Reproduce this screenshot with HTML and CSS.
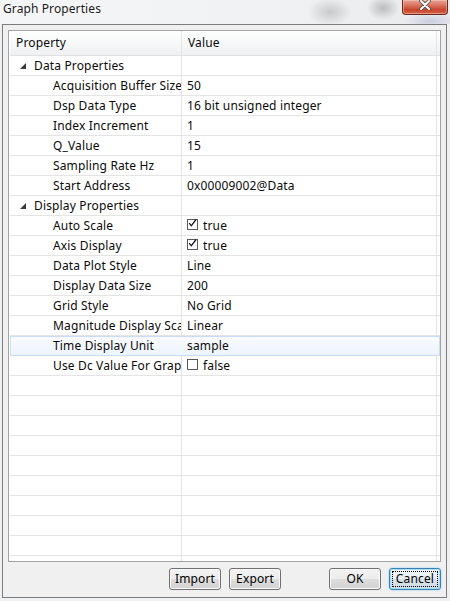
FILE: index.html
```html
<!DOCTYPE html>
<html lang="en">
<head>
<meta charset="utf-8">
<title>Graph Properties</title>
<link rel="stylesheet" href="styles.css">
</head>
<body>
<div class="window">
  <div class="titlebar">
    <span class="title">Graph Properties</span>
    <button class="close" aria-label="Close">
      <svg width="12" height="10" viewBox="0 0 12 10">
        <path d="M2,1 L10,9 M10,1 L2,9" stroke="#4b4b4b" stroke-width="3.6" stroke-linecap="round"/>
        <path d="M2,1 L10,9 M10,1 L2,9" stroke="#ffffff" stroke-width="2" stroke-linecap="round"/>
      </svg>
    </button>
  </div>
  <div class="frame">
    <div class="grid">
      <div class="row header"><div class="c1">Property</div><div class="c2">Value</div><div class="c3"></div></div>

      <div class="row cat"><div class="c1"><svg class="tri" width="6" height="6" viewBox="0 0 6 6"><polygon points="6,0 6,6 0,6" fill="#3a3a3a"/></svg>Data Properties</div><div class="c2"></div><div class="c3"></div></div>
      <div class="row"><div class="c1">Acquisition Buffer Size</div><div class="c2">50</div><div class="c3"></div></div>
      <div class="row"><div class="c1">Dsp Data Type</div><div class="c2">16 bit unsigned integer</div><div class="c3"></div></div>
      <div class="row"><div class="c1">Index Increment</div><div class="c2">1</div><div class="c3"></div></div>
      <div class="row"><div class="c1">Q_Value</div><div class="c2">15</div><div class="c3"></div></div>
      <div class="row"><div class="c1">Sampling Rate Hz</div><div class="c2">1</div><div class="c3"></div></div>
      <div class="row"><div class="c1">Start Address</div><div class="c2">0x00009002@Data</div><div class="c3"></div></div>

      <div class="row cat"><div class="c1"><svg class="tri" width="6" height="6" viewBox="0 0 6 6"><polygon points="6,0 6,6 0,6" fill="#3a3a3a"/></svg>Display Properties</div><div class="c2"></div><div class="c3"></div></div>
      <div class="row"><div class="c1">Auto Scale</div><div class="c2"><span class="check on"><svg width="11" height="11" viewBox="0 0 11 11"><path d="M2.2,5.2 L4.3,7.8 L9,1.5" fill="none" stroke="#111" stroke-width="1.3"/></svg></span>true</div><div class="c3"></div></div>
      <div class="row"><div class="c1">Axis Display</div><div class="c2"><span class="check on"><svg width="11" height="11" viewBox="0 0 11 11"><path d="M2.2,5.2 L4.3,7.8 L9,1.5" fill="none" stroke="#111" stroke-width="1.3"/></svg></span>true</div><div class="c3"></div></div>
      <div class="row"><div class="c1">Data Plot Style</div><div class="c2">Line</div><div class="c3"></div></div>
      <div class="row"><div class="c1">Display Data Size</div><div class="c2">200</div><div class="c3"></div></div>
      <div class="row"><div class="c1">Grid Style</div><div class="c2">No Grid</div><div class="c3"></div></div>
      <div class="row"><div class="c1">Magnitude Display Scale</div><div class="c2">Linear</div><div class="c3"></div></div>
      <div class="row sel"><div class="c1">Time Display Unit</div><div class="c2">sample</div><div class="c3"></div></div>
      <div class="row"><div class="c1">Use Dc Value For Graph</div><div class="c2"><span class="check"></span>false</div><div class="c3"></div></div>

      <div class="row"><div class="c1"></div><div class="c2"></div><div class="c3"></div></div>
      <div class="row"><div class="c1"></div><div class="c2"></div><div class="c3"></div></div>
      <div class="row"><div class="c1"></div><div class="c2"></div><div class="c3"></div></div>
      <div class="row"><div class="c1"></div><div class="c2"></div><div class="c3"></div></div>
      <div class="row"><div class="c1"></div><div class="c2"></div><div class="c3"></div></div>
      <div class="row"><div class="c1"></div><div class="c2"></div><div class="c3"></div></div>
      <div class="row"><div class="c1"></div><div class="c2"></div><div class="c3"></div></div>
      <div class="row"><div class="c1"></div><div class="c2"></div><div class="c3"></div></div>
      <div class="row"><div class="c1"></div><div class="c2"></div><div class="c3"></div></div>
      <div class="row filler"><div class="c1"></div><div class="c2"></div><div class="c3"></div></div>
    </div>
    <div class="buttons">
      <button class="btn">Import</button>
      <button class="btn gap">Export</button>
      <button class="btn">OK</button>
      <button class="btn default"><span class="focus">Cancel</span></button>
    </div>
  </div>
</div>
</body>
</html>
```
FILE: styles.css
```css
html, body {
  margin: 0;
  padding: 0;
}
body {
  width: 450px;
  height: 601px;
  overflow: hidden;
  background: #eef0f2;
  font-family: "Noto Sans", "Open Sans", sans-serif;
  font-size: 12px;
  color: #000;
}
.window {
  display: flex;
  flex-direction: column;
  width: 450px;
}
.titlebar {
  height: 24px;
  display: flex;
  align-items: flex-start;
  background:
    radial-gradient(ellipse 22px 14px at 330px 12px, rgba(170,170,170,0.55), rgba(170,170,170,0)),
    radial-gradient(ellipse 16px 12px at 383px 8px, rgba(140,140,140,0.5), rgba(140,140,140,0)),
    radial-gradient(ellipse 26px 8px at 430px 21px, rgba(180,185,215,0.6), rgba(180,185,215,0)),
    linear-gradient(90deg, #f4f5f6 0%, #f1f2f3 60%, #e9eaec 100%);
}
.title {
  padding-left: 3px;
  line-height: 18px;
  font-size: 12px;
  letter-spacing: 0.1px;
  color: #1a1a1a;
  text-shadow: 0 0 4px #fff;
}
.close {
  margin-left: auto;
  margin-right: 2px;
  width: 46px;
  height: 15px;
  padding: 0;
  display: flex;
  align-items: flex-start;
  justify-content: center;
  border: 1px solid #6a2b20;
  border-top: none;
  border-radius: 0 0 4px 4px;
  background: linear-gradient(#e9a698 0%, #d66a55 45%, #c8442c 70%, #d5654b 100%);
  box-shadow: inset 0 0 0 1px rgba(255,210,200,0.45);
}
.close svg {
  display: block;
}
.frame {
  margin-left: 2px;
  width: 445px;
  height: 574px;
  box-sizing: border-box;
  border: 1px solid #7c7c7c;
  background: #f0f0f0;
  padding: 5px 5px 7px 5px;
  display: flex;
  flex-direction: column;
}
.grid {
  height: 532px;
  box-sizing: border-box;
  border: 1px solid #a3a3a3;
  background: #fff;
  padding-left: 1px;
  display: flex;
  flex-direction: column;
}
.row {
  display: grid;
  grid-template-columns: 172px 255px 1fr;
  height: 20px;
  box-sizing: border-box;
  border-bottom: 1px solid #e4e4e4;
  line-height: 19px;
  white-space: nowrap;
  letter-spacing: 0.15px;
  color: #0a0a0a;
}
.row > div {
  overflow: hidden;
}
.c1, .c2 {
  border-right: 1px solid #e4e4e4;
}
.c1 {
  padding-left: 43px;
}
.c2 {
  padding-left: 5px;
  display: flex;
  align-items: center;
}
.header {
  height: 25px;
  line-height: 24px;
  background: linear-gradient(#ffffff 0%, #f7f8f9 50%, #eff0f2 100%);
  border-bottom: 1px solid #e1e1e1;
}
.header .c1 {
  padding-left: 6px;
}
.header .c2 {
  padding-left: 6px;
}
.cat .c1 {
  padding-left: 10px;
  display: flex;
  align-items: center;
}
.tri {
  margin-right: 8px;
  margin-top: 1px;
}
.sel {
  background: linear-gradient(#fafcff, #edf4fd);
  box-shadow: inset 0 1px 0 #c9def6, inset 1px 0 0 #c9def6, inset -1px 0 0 #c9def6;
  border-bottom-color: #c9def6;
}
.sel .c1, .sel .c2 {
  border-right-color: transparent;
}
.filler {
  flex: 1;
  border-bottom: none;
}
.check {
  display: inline-block;
  width: 11px;
  height: 11px;
  box-sizing: border-box;
  border: 1px solid #5a5a5a;
  background: #fff;
  margin-right: 5px;
  margin-top: -3px;
  position: relative;
}
.check svg {
  position: absolute;
  left: -1px;
  top: -2px;
}
.buttons {
  margin-top: 6px;
  display: flex;
  justify-content: flex-end;
  gap: 8px;
}
.btn {
  width: 52px;
  height: 22px;
  padding: 0;
  box-sizing: border-box;
  font-family: "Noto Sans", "Open Sans", sans-serif;
  font-size: 12px;
  letter-spacing: 0.15px;
  color: #000;
  border: 1px solid #707070;
  border-radius: 3px;
  background: linear-gradient(#f3f3f3 0%, #ececec 50%, #dedede 50%, #d2d2d2 100%);
  box-shadow: inset 0 0 0 1px #fbfbfb;
  line-height: 18px;
}
.btn.gap {
  margin-right: 40px;
}
.btn.default {
  border-color: #3c7fb1;
  background: linear-gradient(#f1f5f8 0%, #e8eef3 50%, #d8e2ea 50%, #cfdbe5 100%);
  box-shadow: inset 0 0 0 1px #a6def5, 0 0 2px #7fcaf0;
  padding: 2px;
}
.focus {
  display: block;
  height: 16px;
  line-height: 14px;
  border: 1px dotted #000;
  box-sizing: border-box;
}
```
